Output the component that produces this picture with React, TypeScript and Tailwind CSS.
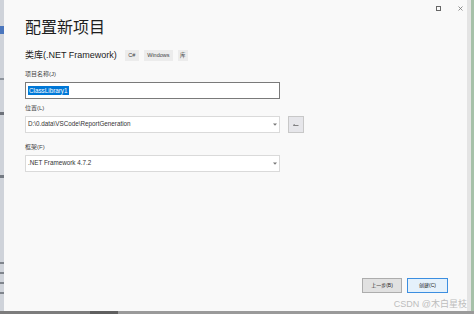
const FONT = { fontFamily: '"Liberation Sans", "Noto Sans CJK SC", sans-serif' };

function Tag({ label, w }: { label: string; w: string }) {
  return (
    <span className={`${w} flex h-[11px] items-center justify-center bg-[#ececec] text-[5.5px] text-[#444]`}>
      {label}
    </span>
  );
}

function Arrow() {
  return (
    <svg width="4" height="3" viewBox="0 0 4 3" className="mr-[2px]">
      <path d="M0 0.5 L4 0.5 L2 2.8 Z" fill="#777" />
    </svg>
  );
}

function ComboBox({ value }: { value: string }) {
  return (
    <div className="flex h-[17px] w-[255px] items-center justify-between border border-[#dadada] bg-white pl-[2px]">
      <span className="text-[6.3px] leading-none text-[#333]">{value}</span>
      <Arrow />
    </div>
  );
}

export default function App() {
  return (
    <div className="flex h-[314px] w-[474px] flex-col overflow-hidden bg-[#8a8a8a]" style={FONT}>
      <div className="flex h-[311px]">
        {/* desktop behind, left edge */}
        <div className="flex w-[4px] flex-col bg-[#cfd3da]">
          <div className="mt-[26px] h-[8px] bg-[#4a76bd]" />
          <div className="mt-[44px] h-[2px] bg-[#8d939c]" />
          <div className="mt-[32px] h-[3px] bg-[#6d727a]" />
          <div className="mt-[60px] h-[3px] bg-[#747a83]" />
          <div className="mt-[84px] h-[2px] bg-[#7f848c]" />
          <div className="mt-[8px] h-[2px] bg-[#7f848c]" />
          <div className="mt-[8px] h-[2px] bg-[#7f848c]" />
          <div className="mt-[8px] h-[2px] bg-[#7f848c]" />
        </div>

        {/* dialog */}
        <div className="flex flex-1 flex-col bg-[#f9f9f9]">
          <div className="flex h-[16px] items-center justify-end gap-[17px] pr-[4px]">
            <div className="h-[5px] w-[5px] border border-[#666]" />
            <svg width="5" height="5" viewBox="0 0 5 5">
              <path d="M0.5 0.5 L4.5 4.5 M4.5 0.5 L0.5 4.5" stroke="#777" strokeWidth="0.8" />
            </svg>
          </div>

          <div className="flex flex-1 flex-col pl-[21px] pr-[19px]">
            <h1 className="mt-[2px] text-[16px] leading-[20px] font-normal text-[#1e1e1e]">配置新项目</h1>

            <div className="mt-[11px] flex h-[12px] items-center">
              <span className="text-[9px] leading-none text-[#222]">类库(.NET Framework)</span>
              <div className="ml-[8px] flex gap-[5px]">
                <Tag label="C#" w="w-[14px]" />
                <Tag label="Windows" w="w-[29px]" />
                <Tag label="库" w="w-[10px]" />
              </div>
            </div>

            <label className="mt-[9px] text-[6px] leading-[9px] text-[#444]">项目名称(J)</label>
            <div className="mt-[3px] flex h-[17px] w-[255px] items-center border border-[#7a7a7a] bg-white pl-[2px]">
              <span className="bg-[#0078d7] px-[1px] text-[6.3px] leading-[9px] text-white">ClassLibrary1</span>
            </div>

            <label className="mt-[5px] text-[6px] leading-[9px] text-[#444]">位置(L)</label>
            <div className="mt-[3px] flex items-center gap-[8px]">
              <ComboBox value="D:\0.data\VSCode\ReportGeneration" />
              <div className="flex h-[17px] w-[16px] items-center justify-center border border-[#c8c8c8] bg-[#e6e6ea]">
                <svg width="6" height="4" viewBox="0 0 6 4">
                  <path d="M0.5 2.5 H5.5 M0.5 2.5 L1.5 1" stroke="#555" strokeWidth="0.7" fill="none" />
                </svg>
              </div>
            </div>

            <label className="mt-[10px] text-[6px] leading-[9px] text-[#444]">框架(F)</label>
            <div className="mt-[3px]">
              <ComboBox value=".NET Framework 4.7.2" />
            </div>

            <div className="flex-1" />

            <div className="flex justify-end gap-[5px]">
              <button className="flex h-[15px] w-[40px] items-center justify-center border border-[#adadad] bg-[#e1e1e1] text-[5px] text-[#222]">
                上一步(B)
              </button>
              <button className="flex h-[15px] w-[41px] items-center justify-center border border-[#3c8ee0] bg-[#e5f1fb] text-[5px] text-[#222]">
                创建(C)
              </button>
            </div>

            <div className="mt-[6px] -mr-[19px] flex h-[12px] items-center justify-end pb-[1px]">
              <span className="text-[9px] leading-none text-[#bdbdbd]">CSDN @木白星枝</span>
            </div>
          </div>
        </div>

        {/* edges on the right */}
        <div className="w-[4px] bg-[#e4e4e4]" />
        <div className="w-[3px] bg-[#a6c1a9]" />
      </div>

      {/* taskbar strip */}
      <div className="flex h-[3px]">
        <div className="w-[90px] bg-[#7c7c7c]" />
        <div className="w-[28px] bg-[#5f5f5f]" />
        <div className="flex-1 bg-[#9a9a9a]" />
      </div>
    </div>
  );
}
